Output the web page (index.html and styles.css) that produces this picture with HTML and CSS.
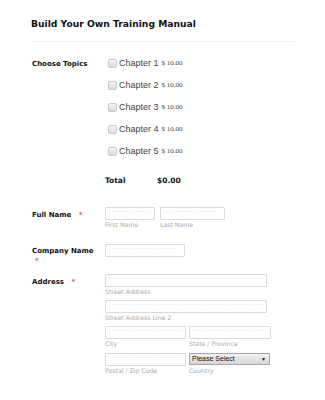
FILE: index.html
```html
<!DOCTYPE html>
<html lang="en">
<head>
    <meta charset="UTF-8">
    <meta name="viewport" content="width=device-width, initial-scale=1.0">
    <title>Build Your Own Training Manual</title>
    <link rel="stylesheet" href="styles.css">
</head>
<body>

<div class="form">
    <h1 class="title">Build Your Own Training Manual</h1>
    <div class="divider"></div>

    <div class="row topics">
        <div class="label">Choose Topics</div>
        <div class="field">
            <label class="chapter"><span class="box"></span>Chapter 1 <span class="price">$ 10.00</span></label>
            <label class="chapter"><span class="box"></span>Chapter 2 <span class="price">$ 10.00</span></label>
            <label class="chapter"><span class="box"></span>Chapter 3 <span class="price">$ 10.00</span></label>
            <label class="chapter"><span class="box"></span>Chapter 4 <span class="price">$ 10.00</span></label>
            <label class="chapter"><span class="box"></span>Chapter 5 <span class="price">$ 10.00</span></label>
            <div class="total">
                <span class="total-label">Total</span>
                <span class="total-value">$0.00</span>
            </div>
        </div>
    </div>

    <div class="row name-row">
        <div class="label">Full Name <span class="req">*</span></div>
        <div class="field">
            <div class="line">
                <div class="sub w49"><input type="text"><span class="hint">First Name</span></div>
                <div class="sub w64"><input type="text"><span class="hint">Last Name</span></div>
            </div>
        </div>
    </div>

    <div class="row company-row">
        <div class="label">Company Name<br><span class="req star-below">*</span></div>
        <div class="field">
            <input type="text" class="w79">
        </div>
    </div>

    <div class="row address-row">
        <div class="label">Address <span class="req">*</span></div>
        <div class="field">
            <div class="sub w161"><input type="text"><span class="hint">Street Address</span></div>
            <div class="sub w161"><input type="text"><span class="hint">Street Address Line 2</span></div>
            <div class="line">
                <div class="sub w80"><input type="text"><span class="hint">City</span></div>
                <div class="sub w81"><input type="text"><span class="hint">State / Province</span></div>
            </div>
            <div class="line">
                <div class="sub w80"><input type="text"><span class="hint">Postal / Zip Code</span></div>
                <div class="sub w80">
                    <div class="select">Please Select<span class="arrow">&#9660;</span></div>
                    <span class="hint">Country</span>
                </div>
            </div>
        </div>
    </div>

    <div class="row phone-row">
        <div class="label">Work Phone <span class="req">*</span></div>
        <div class="field">
            <div class="line phone">
                <input type="text" class="w30">
                <span class="dash">-</span>
                <input type="text" class="w79">
            </div>
        </div>
    </div>
</div>

</body>
</html>
```

FILE: styles.css
```css
body {
    margin: 0;
    padding: 0;
    background-color: #ffffff;
    color: #111;
    font-family: 'DejaVu Sans', Verdana, sans-serif;
}

.form {
    padding: 17px 30px 0 31px;
}

.title {
    margin: 0;
    font-size: 9.2px;
    font-weight: bold;
    color: #111;
    line-height: 14px;
}

.divider {
    margin-top: 10px;
    height: 1px;
    background: repeating-linear-gradient(to right, #e2e2e2 0 1px, transparent 1px 2px);
}

.row {
    display: flex;
}

.label {
    width: 73px;
    flex-shrink: 0;
    font-size: 7px;
    font-weight: bold;
    line-height: 10px;
    padding-left: 1px;
}

.req {
    color: #e85a5a;
    margin-left: 5px;
}

.star-below {
    margin-left: 3px;
}

.field {
    display: flex;
    flex-direction: column;
}

/* topics */
.topics {
    margin-top: 15px;
}

.topics .label {
    padding-top: 2px;
}

.chapter {
    display: flex;
    align-items: center;
    height: 22px;
    margin-top: -5px;
    margin-bottom: 5px;
    font-family: 'Liberation Sans', Arial, sans-serif;
    font-size: 9px;
    color: #444;
    padding-left: 3px;
}

.box {
    width: 7px;
    height: 7px;
    border: 1px solid #c8c8c8;
    border-radius: 2px;
    background: linear-gradient(#f4f4f4, #dcdcdc);
    margin-right: 2px;
}

.price {
    font-family: 'Liberation Serif', serif;
    font-size: 7px;
    color: #444;
    margin-left: 3px;
}

.total {
    display: flex;
    margin-top: 9px;
    font-size: 7.5px;
    font-weight: bold;
}

.total-label {
    width: 52px;
}

/* text fields */
input {
    box-sizing: border-box;
    height: 13px;
    margin: 0;
    padding: 0;
    border: 1px solid #dadada;
    border-radius: 1px;
    background: #fff repeating-linear-gradient(to right, #dedede 0 1px, transparent 1px 3px) no-repeat 3px 3px / calc(100% - 6px) 1px;
}

.sub {
    display: flex;
    flex-direction: column;
}

.sub input {
    width: 100%;
}

.hint {
    font-size: 6.2px;
    color: #aaa;
    line-height: 8px;
    margin-top: 1px;
}

.line {
    display: flex;
    gap: 3px;
}

.w49 { width: 50px; }
.w64 { width: 65px; margin-left: 2px; }
.w79 { width: 80px; }
.w161 { width: 162px; margin-bottom: 4px; }
.w80 { width: 81px; margin-bottom: 5px; }
.w81 { width: 82px; }
.w30 { width: 31px; }

.name-row {
    margin-top: 22px;
}

.name-row .label {
    padding-top: 3px;
}

.company-row {
    margin-top: 15px;
}

.company-row .label {
    padding-top: 2px;
}

.address-row {
    margin-top: 8px;
}

.address-row .label {
    padding-top: 3px;
}

.select {
    box-sizing: border-box;
    height: 12px;
    border: 1px solid #a8a8a8;
    background: linear-gradient(#f2f2f2, #d6d6d6);
    font-family: 'Liberation Sans', Arial, sans-serif;
    font-size: 7px;
    color: #111;
    line-height: 10px;
    padding-left: 2px;
    display: flex;
    justify-content: space-between;
    margin-bottom: 1px;
}

.arrow {
    font-size: 5px;
    padding-right: 3px;
}

.phone-row {
    margin-top: 20px;
}

.phone .dash {
    width: 8px;
    font-size: 8px;
    color: #fff;
}
```
